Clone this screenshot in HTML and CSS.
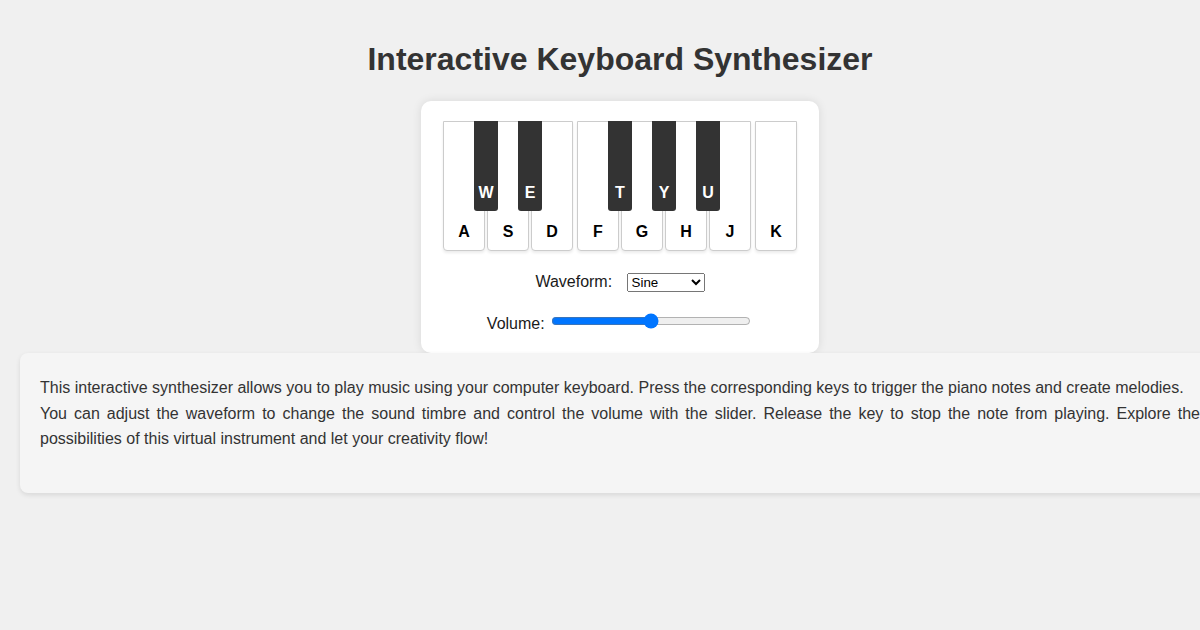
FILE: index.html
```html
<!DOCTYPE html>
<html lang="en">
<head>
<meta charset="utf-8">
<title>Interactive Keyboard Synthesizer</title>
<link rel="stylesheet" href="styles.css">
</head>
<body>
<h1 class="title">Interactive Keyboard Synthesizer</h1>
<div class="synth">
  <div class="keyboard">
    <div class="key white">A</div>
    <div class="key black">W</div>
    <div class="key white">S</div>
    <div class="key black">E</div>
    <div class="key white gap">D</div>
    <div class="key white">F</div>
    <div class="key black">T</div>
    <div class="key white">G</div>
    <div class="key black">Y</div>
    <div class="key white">H</div>
    <div class="key black">U</div>
    <div class="key white gap">J</div>
    <div class="key white">K</div>
  </div>
  <div class="control control-wave">
    <label class="label wave-label" for="waveform">Waveform:</label>
    <select id="waveform" class="select">
      <option>Sine</option>
      <option>Square</option>
      <option>Sawtooth</option>
      <option>Triangle</option>
    </select>
  </div>
  <div class="control control-volume">
    <label class="label" for="volume">Volume:</label>
    <input id="volume" class="slider" type="range" min="0" max="1" step="0.01" value="0.5">
  </div>
</div>
<div class="info">
  <p class="info-text">This interactive synthesizer allows you to play music using your computer keyboard. Press the corresponding keys to trigger the piano notes and create melodies.<br>You can adjust the waveform to change the sound timbre and control the volume with the slider. Release the key to stop the note from playing. Explore the possibilities of this virtual instrument and let your creativity flow!</p>
</div>
</body>
</html>
```

FILE: styles.css
```css
html {
  overflow-x: hidden;
}

body {
  margin: 0;
  padding: 20px;
  width: 100%;
  background: #f0f0f0;
  font-family: "Liberation Sans", Arial, sans-serif;
  color: #333;
}

.title {
  margin: 21px 0 23px;
  font-size: 32px;
  font-weight: bold;
  text-align: center;
  color: #333;
}

.synth {
  width: fit-content;
  margin: 0 auto;
  padding: 20px 22px;
  background: #fff;
  border-radius: 10px;
  box-shadow: 0 0 10px rgba(0, 0, 0, 0.1);
}

.keyboard {
  display: flex;
  align-items: flex-start;
}

.key {
  box-sizing: border-box;
  display: flex;
  align-items: flex-end;
  justify-content: center;
  padding-bottom: 9px;
  font-size: 16px;
  font-weight: bold;
  flex-shrink: 0;
}

.white {
  width: 42px;
  height: 130px;
  background: #fff;
  border: 1px solid #ccc;
  border-radius: 0 0 4px 4px;
  box-shadow: 0 2px 3px rgba(0, 0, 0, 0.08);
  color: #000;
}

.white.gap {
  margin-right: 4px;
}

.black {
  position: relative;
  z-index: 1;
  width: 24px;
  height: 90px;
  margin: 0 -11px;
  background: #333;
  border-radius: 0 0 3px 3px;
  color: #fff;
}

.control {
  text-align: center;
  font-size: 16px;
  color: #1a1a1a;
}

.control-wave {
  margin-top: 22px;
}

.control-volume {
  margin-top: 19px;
}

.wave-label {
  margin-right: 10px;
}

.select {
  font-family: "Liberation Sans", Arial, sans-serif;
}

.slider {
  width: 200px;
}

.info {
  box-sizing: border-box;
  width: 100%;
  padding: 22px 20px 41px;
  background: #f5f5f5;
  border-radius: 8px;
  box-shadow: 0 2px 5px rgba(0, 0, 0, 0.1);
}

.info-text {
  margin: 0;
  font-size: 16px;
  line-height: 1.6;
  text-align: justify;
  color: #333;
}
```
